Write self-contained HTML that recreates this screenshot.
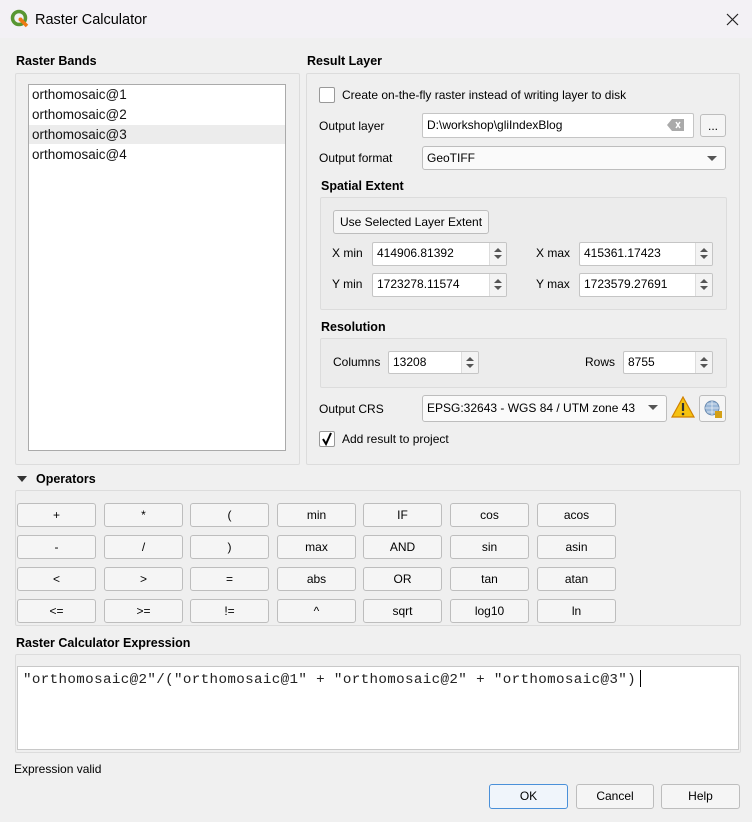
<!DOCTYPE html>
<html><head><meta charset="utf-8"><style>
*{box-sizing:border-box;margin:0;padding:0}
body{width:752px;height:822px;background:#f0f0f0;font-family:"Liberation Sans",sans-serif;font-size:12px;color:#000;position:relative;overflow:hidden}
.a{position:absolute}
.t{position:absolute;white-space:nowrap;line-height:14px}
.b{font-weight:bold;font-size:12.5px}
.grp{position:absolute;border:1px solid #dcdcdc;border-radius:2px;background:#efefef}
.in{position:absolute;background:#fff;border:1px solid #c5c5c5;border-radius:2px;padding-left:4px;line-height:21px;white-space:nowrap;overflow:hidden}
.btn{position:absolute;background:#f5f5f5;border:1px solid #bdbdbd;border-radius:3px;text-align:center;line-height:22px;white-space:nowrap}
.spin{position:absolute;right:0;top:0;bottom:0;width:17px;border-left:1px solid #ddd;background:#f3f3f3}
.spin:before{content:"";position:absolute;left:4px;top:5px;border:4px solid transparent;border-bottom:4px solid #555;border-top:0}
.spin:after{content:"";position:absolute;left:4px;top:12px;border:4px solid transparent;border-top:4px solid #555;border-bottom:0}
.dd:after{content:"";position:absolute;right:8px;top:9px;border:5px solid transparent;border-top:5px solid #555;border-bottom:0}
.cb{position:absolute;width:16px;height:16px;background:#fff;border:1px solid #999;border-radius:2px}
</style></head><body>
<div class="a" style="left:0;top:0;width:752px;height:38px;background:#f3f1f5"></div>
<svg class="a" style="left:10px;top:9px" width="20" height="20" viewBox="0 0 20 20"><circle cx="9" cy="9" r="6.5" fill="none" stroke="#589632" stroke-width="3.5"/><path d="M10 10 L17 17" stroke="#ee7913" stroke-width="3.5"/><circle cx="10.5" cy="10.5" r="2" fill="#ee7913"/></svg>
<div class="t" style="left:35px;top:12px;font-size:14.5px;line-height:16px">Raster Calculator</div>
<svg class="a" style="left:726px;top:13px" width="13" height="13"><path d="M1 1L12 12M12 1L1 12" stroke="#222" stroke-width="1.2"/></svg>

<div class="t b" style="left:16px;top:54px">Raster Bands</div>
<div class="grp" style="left:15px;top:73px;width:285px;height:392px"></div>
<div class="a" style="left:28px;top:84px;width:258px;height:367px;background:#fff;border:1px solid #aaa"></div>
<div class="a" style="left:29px;top:125px;width:256px;height:19px;background:#ececec"></div>
<div class="t" style="left:32px;top:88px;font-size:13.5px;color:#111">orthomosaic@1</div>
<div class="t" style="left:32px;top:108px;font-size:13.5px;color:#111">orthomosaic@2</div>
<div class="t" style="left:32px;top:128px;font-size:13.5px;color:#111">orthomosaic@3</div>
<div class="t" style="left:32px;top:148px;font-size:13.5px;color:#111">orthomosaic@4</div>

<div class="t b" style="left:307px;top:54px">Result Layer</div>
<div class="grp" style="left:306px;top:73px;width:434px;height:392px"></div>
<div class="cb" style="left:319px;top:87px"></div>
<div class="t" style="left:342px;top:88px">Create on-the-fly raster instead of writing layer to disk</div>
<div class="t" style="left:319px;top:119px">Output layer</div>
<div class="in" style="left:422px;top:113px;width:272px;height:25px;line-height:23px">D:\workshop\gliIndexBlog</div>
<svg class="a" style="left:667px;top:119px" width="18" height="12"><path d="M5 0H17V12H5L0 6Z" fill="#aaa"/><path d="M9 3L13 9M13 3L9 9" stroke="#fff" stroke-width="1.5"/></svg>
<div class="btn" style="left:700px;top:114px;width:26px;height:23px">...</div>
<div class="t" style="left:319px;top:151px">Output format</div>
<div class="btn dd" style="left:422px;top:146px;width:304px;height:24px;text-align:left;padding-left:4px;background:#fafafa">GeoTIFF</div>

<div class="t b" style="left:321px;top:179px">Spatial Extent</div>
<div class="grp" style="left:320px;top:197px;width:407px;height:113px;background:#ececec"></div>
<div class="btn" style="left:333px;top:210px;width:156px;height:24px">Use Selected Layer Extent</div>
<div class="t" style="left:332px;top:246px">X min</div>
<div class="in" style="left:372px;top:242px;width:135px;height:24px">414906.81392<div class="spin"></div></div>
<div class="t" style="left:536px;top:246px">X max</div>
<div class="in" style="left:579px;top:242px;width:134px;height:24px">415361.17423<div class="spin"></div></div>
<div class="t" style="left:332px;top:277px">Y min</div>
<div class="in" style="left:372px;top:273px;width:135px;height:24px">1723278.11574<div class="spin"></div></div>
<div class="t" style="left:536px;top:277px">Y max</div>
<div class="in" style="left:579px;top:273px;width:134px;height:24px">1723579.27691<div class="spin"></div></div>

<div class="t b" style="left:321px;top:320px">Resolution</div>
<div class="grp" style="left:320px;top:338px;width:407px;height:50px;background:#ececec"></div>
<div class="t" style="left:333px;top:355px">Columns</div>
<div class="in" style="left:388px;top:351px;width:91px;height:23px;line-height:21px">13208<div class="spin"></div></div>
<div class="t" style="left:585px;top:355px">Rows</div>
<div class="in" style="left:623px;top:351px;width:90px;height:23px;line-height:21px">8755<div class="spin"></div></div>

<div class="t" style="left:319px;top:402px">Output CRS</div>
<div class="btn dd" style="left:422px;top:395px;width:245px;height:27px;text-align:left;padding-left:4px;line-height:25px;background:#fafafa;overflow:hidden">EPSG:32643 - WGS 84 / UTM zone 43</div>
<svg class="a" style="left:671px;top:396px" width="24" height="22"><path d="M12 1L23 21H1Z" fill="#f5c211" stroke="#d08000" stroke-width="1.2"/><path d="M12 7V15" stroke="#333" stroke-width="2.2"/><circle cx="12" cy="18" r="1.3" fill="#333"/></svg>
<div class="btn" style="left:699px;top:395px;width:27px;height:27px"></div>
<svg class="a" style="left:703px;top:399px" width="20" height="20"><circle cx="9" cy="9" r="7" fill="#9bb8d8" stroke="#6a8bb0"/><path d="M2 9H16M9 2V16M4 5H14M4 13H14" stroke="#e8eef5" stroke-width="0.8"/><rect x="12" y="12" width="7" height="7" fill="#d4a017"/></svg>
<div class="cb" style="left:319px;top:431px"></div>
<svg class="a" style="left:319px;top:431px" width="16" height="16"><path d="M4 8L7 13L12 2" fill="none" stroke="#000" stroke-width="2"/></svg>
<div class="t" style="left:342px;top:432px">Add result to project</div>

<div class="a" style="left:17px;top:476px;border:5px solid transparent;border-top:6px solid #333;border-bottom:0"></div>
<div class="t b" style="left:36px;top:472px">Operators</div>
<div class="grp" style="left:15px;top:490px;width:726px;height:136px"></div>

<div class="btn" style="left:17px;top:503px;width:79px;height:24px">+</div>
<div class="btn" style="left:104px;top:503px;width:79px;height:24px">*</div>
<div class="btn" style="left:190px;top:503px;width:79px;height:24px">(</div>
<div class="btn" style="left:277px;top:503px;width:79px;height:24px">min</div>
<div class="btn" style="left:363px;top:503px;width:79px;height:24px">IF</div>
<div class="btn" style="left:450px;top:503px;width:79px;height:24px">cos</div>
<div class="btn" style="left:537px;top:503px;width:79px;height:24px">acos</div>

<div class="btn" style="left:17px;top:535px;width:79px;height:24px">-</div>
<div class="btn" style="left:104px;top:535px;width:79px;height:24px">/</div>
<div class="btn" style="left:190px;top:535px;width:79px;height:24px">)</div>
<div class="btn" style="left:277px;top:535px;width:79px;height:24px">max</div>
<div class="btn" style="left:363px;top:535px;width:79px;height:24px">AND</div>
<div class="btn" style="left:450px;top:535px;width:79px;height:24px">sin</div>
<div class="btn" style="left:537px;top:535px;width:79px;height:24px">asin</div>

<div class="btn" style="left:17px;top:567px;width:79px;height:24px">&lt;</div>
<div class="btn" style="left:104px;top:567px;width:79px;height:24px">&gt;</div>
<div class="btn" style="left:190px;top:567px;width:79px;height:24px">=</div>
<div class="btn" style="left:277px;top:567px;width:79px;height:24px">abs</div>
<div class="btn" style="left:363px;top:567px;width:79px;height:24px">OR</div>
<div class="btn" style="left:450px;top:567px;width:79px;height:24px">tan</div>
<div class="btn" style="left:537px;top:567px;width:79px;height:24px">atan</div>

<div class="btn" style="left:17px;top:599px;width:79px;height:24px">&lt;=</div>
<div class="btn" style="left:104px;top:599px;width:79px;height:24px">&gt;=</div>
<div class="btn" style="left:190px;top:599px;width:79px;height:24px">!=</div>
<div class="btn" style="left:277px;top:599px;width:79px;height:24px">^</div>
<div class="btn" style="left:363px;top:599px;width:79px;height:24px">sqrt</div>
<div class="btn" style="left:450px;top:599px;width:79px;height:24px">log10</div>
<div class="btn" style="left:537px;top:599px;width:79px;height:24px">ln</div>

<div class="t b" style="left:16px;top:636px">Raster Calculator Expression</div>
<div class="grp" style="left:15px;top:654px;width:726px;height:99px"></div>
<div class="a" style="left:17px;top:666px;width:722px;height:84px;background:#fff;border:1px solid #c8c8c8"></div>
<div class="t" style="left:23px;top:672px;font-family:'Liberation Mono',monospace;font-size:14.2px;letter-spacing:0.37px;line-height:16px;color:#222">"orthomosaic@2"/("orthomosaic@1" + "orthomosaic@2" + "orthomosaic@3")</div>
<div class="a" style="left:640px;top:670px;width:1px;height:17px;background:#000"></div>

<div class="t" style="left:14px;top:762px">Expression valid</div>
<div class="btn" style="left:489px;top:784px;width:79px;height:25px;border-color:#4a90d9;background:#f0f5fb">OK</div>
<div class="btn" style="left:576px;top:784px;width:78px;height:25px">Cancel</div>
<div class="btn" style="left:661px;top:784px;width:79px;height:25px">Help</div>
</body></html>
